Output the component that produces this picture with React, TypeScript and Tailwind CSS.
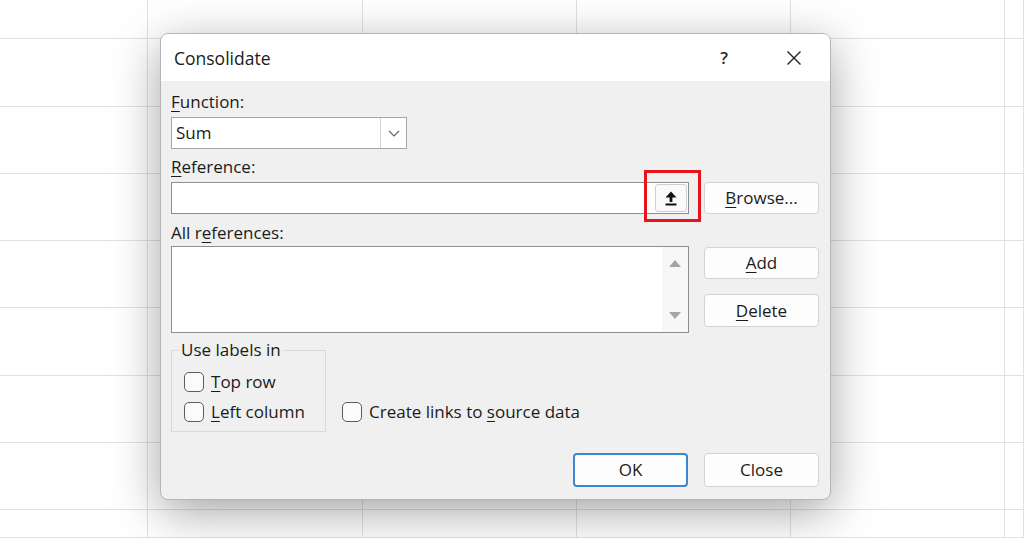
import type { ReactNode } from "react";

const colWidths = "grid-cols-[148px_215px_214px_214px_214px_1fr]";
const rowHeights = "grid-rows-[39px_68px_67px_67px_67px_68px_67px_67px_1fr]";

function Key({ children }: { children: ReactNode }) {
  return <span className="underline decoration-1 underline-offset-[3px]">{children}</span>;
}

function Button({ children, primary = false, className = "" }: { children: ReactNode; primary?: boolean; className?: string }) {
  return (
    <button
      type="button"
      className={`flex w-[115px] items-center justify-center rounded-[4px] bg-[#fdfdfd] text-[17px] leading-[20px] text-[#1b1b1b] ${
        primary ? "border-2 border-[#3f86d2]" : "border border-[#d3d3d3]"
      } ${className}`}
    >
      {children}
    </button>
  );
}

function Checkbox({ children }: { children: ReactNode }) {
  return (
    <label className="flex h-[20px] items-center gap-[7px]">
      <span className="h-[20px] w-[20px] rounded-[5px] border-[1.5px] border-[#5c5c5c] bg-[#fbfbfb]" />
      <span className="text-[17px] leading-[20px]">{children}</span>
    </label>
  );
}

function SheetBackground() {
  return (
    <div className={`grid h-[538px] w-[1024px] ${colWidths} ${rowHeights} bg-white`}>
      {Array.from({ length: 54 }).map((_, i) => (
        <div key={i} className="border-b border-r border-[#e1e1e1]" />
      ))}
    </div>
  );
}

function CollapseArrow() {
  return (
    <svg width="12" height="15" viewBox="0 0 12 15" aria-hidden="true">
      <polygon points="6,0.5 11.5,6.5 7.4,6.5 7.4,11 4.6,11 4.6,6.5 0.5,6.5" fill="#111" />
      <rect x="0.5" y="12.5" width="11" height="2" fill="#111" />
    </svg>
  );
}

export default function App() {
  return (
    <div className="relative h-[538px] w-[1024px] overflow-hidden font-['Open_Sans',sans-serif] text-[#1b1b1b]">
      <SheetBackground />

      <div className="absolute left-[160px] top-[33px] flex h-[467px] w-[671px] flex-col overflow-hidden rounded-[8px] border border-[#b5b5b5] bg-[#f0f0f0] shadow-[0_12px_48px_rgba(0,0,0,0.36)]">
        {/* title bar */}
        <div className="flex h-[47px] shrink-0 items-center bg-white pl-[13px] pr-[13px]">
          <span className="text-[17.5px] leading-[20px]">Consolidate</span>
          <div className="ml-auto flex items-center gap-[24px]">
            <span className="flex w-[46px] justify-center text-[17px] font-semibold leading-[20px] text-[#2a2a2a]">?</span>
            <span className="flex w-[46px] justify-center">
              <svg width="16" height="16" viewBox="0 0 16 16" aria-hidden="true">
                <path d="M1.5 1.5 L14.5 14.5 M14.5 1.5 L1.5 14.5" stroke="#222" strokeWidth="1.4" />
              </svg>
            </span>
          </div>
        </div>

        {/* body */}
        <div className="flex flex-1 flex-col pl-[10px] pr-[11px] pt-[11px]">
          <p className="text-[17px] leading-[20px]">
            <Key>F</Key>unction:
          </p>
          <div className="mt-[5px] flex h-[32px] w-[236px] border border-[#a6a6a6] bg-white">
            <span className="flex-1 pl-[4px] text-[17px] leading-[30px]">Sum</span>
            <span className="flex w-[26px] items-center justify-center border-l border-[#d4d4d4]">
              <svg width="12" height="7" viewBox="0 0 12 7" aria-hidden="true">
                <polyline points="1,1 6,6 11,1" fill="none" stroke="#666" strokeWidth="1.2" />
              </svg>
            </span>
          </div>

          <p className="mt-[8px] text-[17px] leading-[20px]">
            <Key>R</Key>eference:
          </p>
          <div className="mt-[5px] flex gap-[15px]">
            <div className="relative flex h-[32px] w-[518px] items-center justify-end border border-[#8e8e8e] bg-white pr-[1px]">
              <span className="flex h-[28px] w-[32px] items-center justify-center rounded-[3px] border border-[#cfcfcf] bg-[#fafafa]">
                <CollapseArrow />
              </span>
              <span className="absolute left-[472px] top-[-13px] h-[52px] w-[57px] border-[3px] border-[#e8141c]" />
            </div>
            <Button className="h-[32px] w-[114px]">
              <Key>B</Key>rowse...
            </Button>
          </div>

          <p className="mt-[9px] text-[17px] leading-[20px]">
            All r<Key>e</Key>ferences:
          </p>
          <div className="mt-[3px] flex gap-[15px]">
            <div className="flex h-[87px] w-[518px] border border-[#8e8e8e] bg-white">
              <div className="flex-1" />
              <div className="flex w-[26px] flex-col items-center justify-between bg-[#f7f7f7] py-[13px]">
                <svg width="12" height="7" viewBox="0 0 12 7" aria-hidden="true">
                  <polygon points="0,7 6,0 12,7" fill="#a5a5a5" />
                </svg>
                <svg width="12" height="7" viewBox="0 0 12 7" aria-hidden="true">
                  <polygon points="0,0 12,0 6,7" fill="#a5a5a5" />
                </svg>
              </div>
            </div>
            <div className="mt-[1px] flex flex-col gap-[15px]">
              <Button className="h-[32px] w-[114px]">
                <Key>A</Key>dd
              </Button>
              <Button className="h-[33px] w-[114px]">
                <Key>D</Key>elete
              </Button>
            </div>
          </div>

          <div className="mt-[7px] flex items-end gap-[16px]">
            <fieldset className="w-[155px] border border-[#dadada] pb-[9px] pl-[12px] pt-[12px]">
              <legend className="ml-[-5px] px-[2px] text-[17px] leading-[20px]">Use labels in</legend>
              <div className="flex flex-col gap-[10px]">
                <Checkbox>
                  <Key>T</Key>op row
                </Checkbox>
                <Checkbox>
                  <Key>L</Key>eft column
                </Checkbox>
              </div>
            </fieldset>
            <div className="mb-[10px]">
              <Checkbox>
                Create links to <Key>s</Key>ource data
              </Checkbox>
            </div>
          </div>

          <div className="mt-[21px] flex justify-end gap-[16px]">
            <Button primary className="h-[34px]">
              OK
            </Button>
            <Button className="h-[34px]">Close</Button>
          </div>
        </div>
      </div>
    </div>
  );
}
